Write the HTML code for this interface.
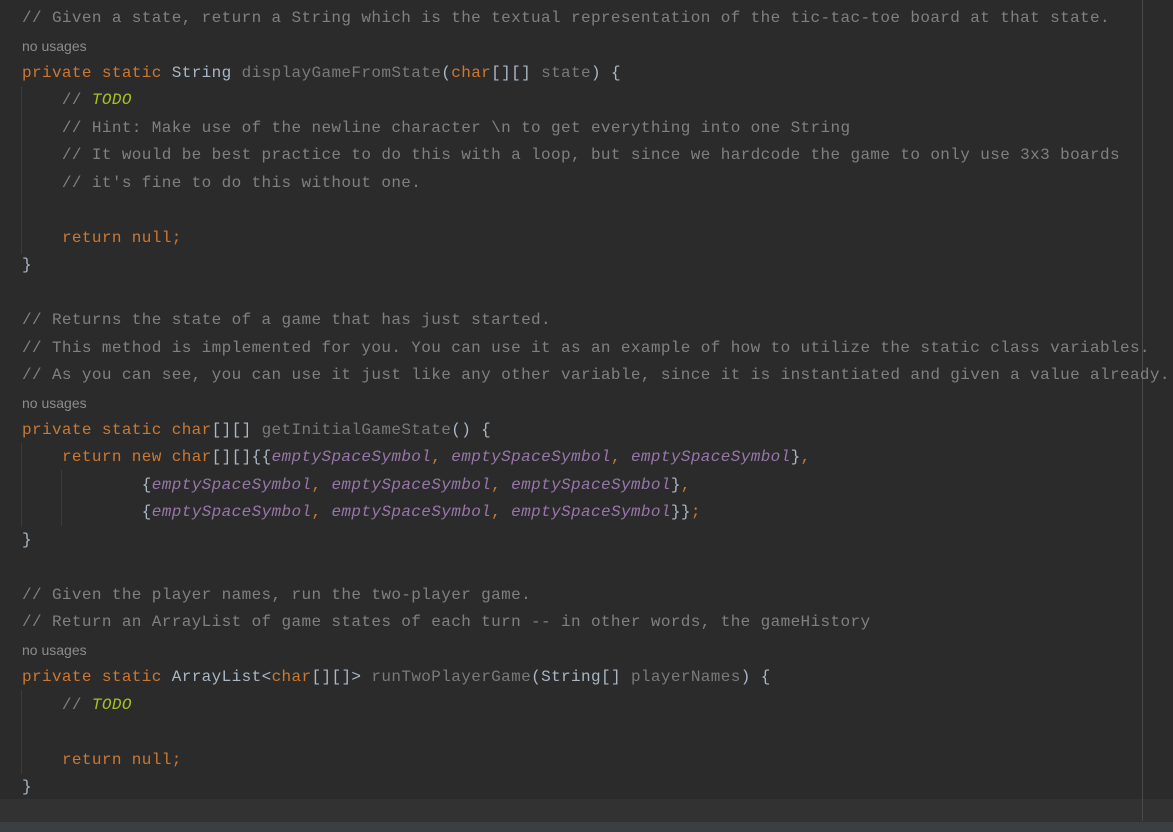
<!DOCTYPE html><html><head><style>
body{margin:0;width:1173px;height:832px;background:#2b2b2b;overflow:hidden;position:relative}
.l{position:absolute;left:22px;height:27.5px;line-height:27.5px;white-space:pre;font-family:"Liberation Mono",monospace;font-size:16px;letter-spacing:0.38px;color:#a9b7c6;margin-top:2px}
.u{font-family:"Liberation Sans",sans-serif;font-size:14px;letter-spacing:0;color:#8c8c8c}
.c{color:#808080}.k{color:#cc7832}.t{color:#a8c023;font-style:italic}.g{color:#7a7a7a}.f{color:#9876aa;font-style:italic}
.guide{position:absolute;width:1px;background:#3b3b3b}
</style></head><body>
<div class="guide" style="left:21px;top:86px;height:168px"></div>
<div class="guide" style="left:21px;top:443px;height:84px"></div>
<div class="guide" style="left:61px;top:470px;height:56px"></div>
<div class="guide" style="left:21px;top:690px;height:84px"></div>
<div style="position:absolute;left:0;top:799px;width:1173px;height:23px;background:#323232"></div>
<div style="position:absolute;left:0;top:822px;width:1173px;height:10px;background:#3c3f41"></div>
<div style="position:absolute;left:1142px;top:0;width:1px;height:821px;background:#4a4a4a"></div>
<div class="l c" style="top:3px">// Given a state, return a String which is the textual representation of the tic-tac-toe board at that state.</div>
<div class="l u" style="top:31px">no usages</div>
<div class="l" style="top:58px"><span class="k">private static </span>String <span class="g">displayGameFromState</span>(<span class="k">char</span>[][] <span class="g">state</span>) {</div>
<div class="l c" style="top:85px">    // <span class="t">TODO</span></div>
<div class="l c" style="top:113px">    // Hint: Make use of the newline character \n to get everything into one String</div>
<div class="l c" style="top:140px">    // It would be best practice to do this with a loop, but since we hardcode the game to only use 3x3 boards</div>
<div class="l c" style="top:168px">    // it's fine to do this without one.</div>
<div class="l" style="top:223px">    <span class="k">return null;</span></div>
<div class="l" style="top:250px">}</div>
<div class="l c" style="top:305px">// Returns the state of a game that has just started.</div>
<div class="l c" style="top:333px">// This method is implemented for you. You can use it as an example of how to utilize the static class variables.</div>
<div class="l c" style="top:360px">// As you can see, you can use it just like any other variable, since it is instantiated and given a value already.</div>
<div class="l u" style="top:388px">no usages</div>
<div class="l" style="top:415px"><span class="k">private static char</span>[][] <span class="g">getInitialGameState</span>() {</div>
<div class="l" style="top:442px">    <span class="k">return new char</span>[][]{{<span class="f">emptySpaceSymbol</span><span class="k">, </span><span class="f">emptySpaceSymbol</span><span class="k">, </span><span class="f">emptySpaceSymbol</span>}<span class="k">,</span></div>
<div class="l" style="top:470px">            {<span class="f">emptySpaceSymbol</span><span class="k">, </span><span class="f">emptySpaceSymbol</span><span class="k">, </span><span class="f">emptySpaceSymbol</span>}<span class="k">,</span></div>
<div class="l" style="top:497px">            {<span class="f">emptySpaceSymbol</span><span class="k">, </span><span class="f">emptySpaceSymbol</span><span class="k">, </span><span class="f">emptySpaceSymbol</span>}}<span class="k">;</span></div>
<div class="l" style="top:525px">}</div>
<div class="l c" style="top:580px">// Given the player names, run the two-player game.</div>
<div class="l c" style="top:607px">// Return an ArrayList of game states of each turn -- in other words, the gameHistory</div>
<div class="l u" style="top:635px">no usages</div>
<div class="l" style="top:662px"><span class="k">private static </span>ArrayList&lt;<span class="k">char</span>[][]&gt; <span class="g">runTwoPlayerGame</span>(String[] <span class="g">playerNames</span>) {</div>
<div class="l c" style="top:690px">    // <span class="t">TODO</span></div>
<div class="l" style="top:745px">    <span class="k">return null;</span></div>
<div class="l" style="top:772px">}</div>
</body></html>
